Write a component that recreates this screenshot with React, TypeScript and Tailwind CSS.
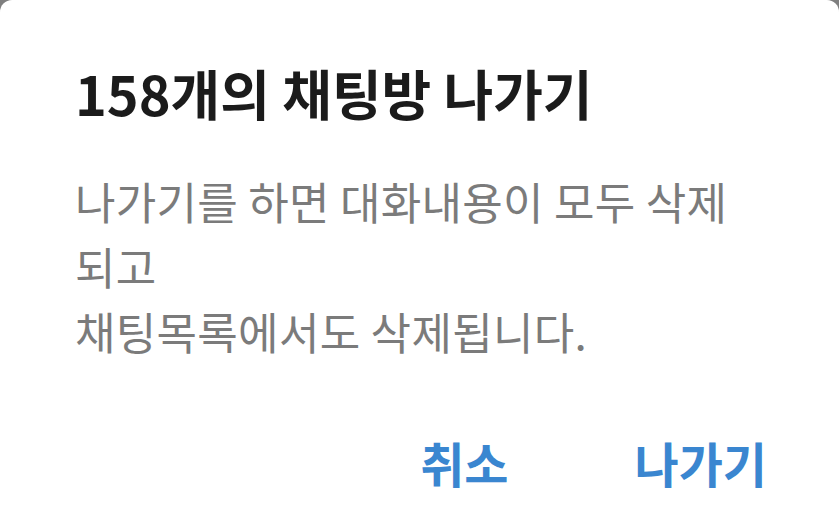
export default function App() {
  return (
    <div className="w-[839px] h-[527px] bg-[#7f7f7f] overflow-hidden">
      <div
        className="h-full bg-white rounded-tl-[12px] rounded-tr-[12px] px-[75px] pt-[61px] flex flex-col"
        style={{ fontFamily: '"Noto Sans CJK KR", "Noto Sans", sans-serif' }}
      >
        <h1 className="text-[54px] leading-[64px] font-bold text-[#1b1b1b] whitespace-nowrap">
          158개의 채팅방 나가기
        </h1>
        <p className="mt-[44px] text-[44px] leading-[65px] text-[#7b7b7b] whitespace-nowrap tracking-[0.3px]">
          나가기를 하면 대화내용이 모두 삭제
          <br />
          되고
          <br />
          채팅목록에서도 삭제됩니다.
        </p>
        <div className="mt-auto mb-[37px] -mr-[3px] flex justify-end gap-[126px]">
          <button className="text-[48px] leading-[56px] font-bold text-[#3a86d0]">
            취소
          </button>
          <button className="text-[48px] leading-[56px] font-bold text-[#3a86d0]">
            나가기
          </button>
        </div>
      </div>
    </div>
  )
}
